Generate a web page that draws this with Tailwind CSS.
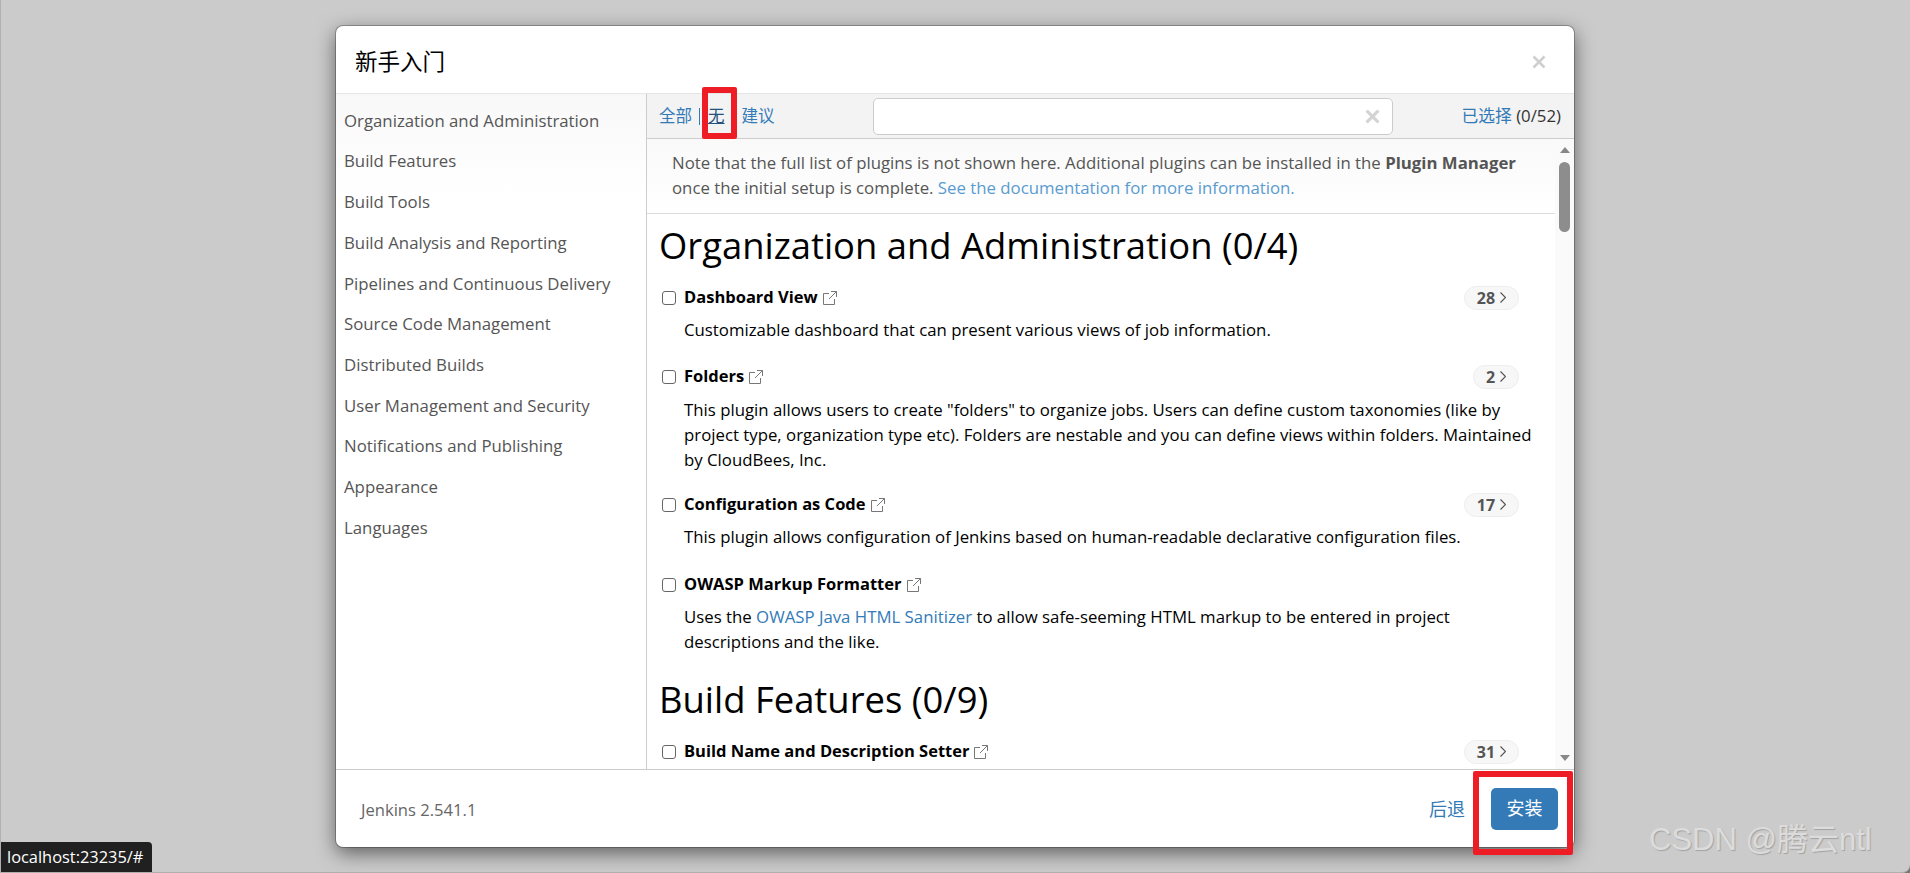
<!DOCTYPE html>
<html lang="zh"><head><meta charset="utf-8"><script src="https://cdn.jsdelivr.net/npm/@tailwindcss/browser@4"></script></head>
<body class="m-0 bg-[#777]">
<div class="relative w-[1910px] h-[873px] overflow-hidden bg-[#cbcbcb] border-l border-b border-[#b0b0b0] rounded-br-[8px] font-['Open_Sans','Noto_Sans_CJK_SC',sans-serif] text-[16.8px] text-[#333]">
  <div class="absolute left-[335px] top-[26px] w-[1238px] h-[821px] bg-white rounded-[7px] shadow-[0_0_0_1px_rgba(0,0,0,0.25),0_6px_20px_rgba(0,0,0,0.55)] flex flex-col overflow-hidden">
    <div class="h-[68px] shrink-0 border-b border-[#e5e5e5] flex items-center justify-between pl-[19px] pr-[28px]">
      <div class="text-[22.5px] text-black pt-[4px]">新手入门</div>
      <svg class="w-[14px] h-[14px] mt-[4px]" viewBox="0 0 14 14"><path d="M1.5 1.5L12.5 12.5M12.5 1.5L1.5 12.5" stroke="#cfcfcf" stroke-width="2.6"/></svg>
    </div>
    <div class="flex-1 flex min-h-0">
      <div class="w-[311px] shrink-0 border-r border-[#ccc] bg-linear-to-b from-[#f8f8f8] to-white to-[15%] pl-[8px] pt-[6px] text-[16.8px] text-[#555]">
        <div class="h-[40.7px] flex items-center">Organization and Administration</div>
        <div class="h-[40.7px] flex items-center">Build Features</div>
        <div class="h-[40.7px] flex items-center">Build Tools</div>
        <div class="h-[40.7px] flex items-center">Build Analysis and Reporting</div>
        <div class="h-[40.7px] flex items-center">Pipelines and Continuous Delivery</div>
        <div class="h-[40.7px] flex items-center">Source Code Management</div>
        <div class="h-[40.7px] flex items-center">Distributed Builds</div>
        <div class="h-[40.7px] flex items-center">User Management and Security</div>
        <div class="h-[40.7px] flex items-center">Notifications and Publishing</div>
        <div class="h-[40.7px] flex items-center">Appearance</div>
        <div class="h-[40.7px] flex items-center">Languages</div>
      </div>
      <div class="flex-1 min-w-0 flex flex-col">
        <div class="h-[45px] shrink-0 bg-[#f3f3f3] border-b border-[#ccc] flex items-center pl-[12px] pr-[13px] text-[16.5px] text-[#337ab7]">
          <span>全部</span><span class="ml-[7px] w-px h-[17px] bg-[#337ab7]"></span><span class="ml-[8px] underline text-[#23527c]">无</span><span class="ml-[17px]">建议</span>
          <div class="ml-[98px] w-[520px] h-[37px] bg-white border border-[#ccc] rounded-[5px] flex items-center justify-end pr-[12px]">
            <svg class="w-[15px] h-[15px]" viewBox="0 0 14 14"><path d="M1.5 1.5L12.5 12.5M12.5 1.5L1.5 12.5" stroke="#d4d4d4" stroke-width="3"/></svg>
          </div>
          <div class="ml-auto text-[16.8px]"><span>已选择</span> <span class="text-[#333]">(0/52)</span></div>
        </div>
        <div class="flex-1 min-h-0 flex">
          <div class="flex-1 min-w-0 overflow-hidden">
            <div class="h-[75px] border-b border-[#ddd] pl-[25px] pr-[20px] pt-[12px] text-[#555] leading-[24.5px] bg-linear-to-b from-[#f9f9f9] to-white">
              Note that the full list of plugins is not shown here. Additional plugins can be installed in the <b>Plugin Manager</b><br>once the initial setup is complete. <span class="text-[#5a9bd1]">See the documentation for more information.</span>
            </div>
            <h2 class="mt-[6px] ml-[12px] text-[36.4px] leading-[50px] text-black">Organization and Administration (0/4)</h2>
            <div class="pl-[15px] pr-[15px] text-black">
              <div class="mt-[15px] flex items-center h-[25px]"><span class="w-[14px] h-[14px] border border-[#666] rounded-[3px] bg-white shrink-0"></span><b class="ml-[8px] font-bold text-[16.5px]">Dashboard View</b><svg class="ml-[4px] w-[16px] h-[16px]" viewBox="0 0 16 16" fill="none" stroke="#777"><path d="M12.5 9v5.5h-11v-11H7M9 1.5h5.5V7M14.5 1.5L7 9"/></svg><span class="ml-auto inline-flex items-center justify-center gap-[5px] h-[24px] w-[55px] mr-[21px] rounded-full bg-[#f7f7f7] border border-[#eee] text-[16px] font-bold text-[#555]">28<svg class="w-[6px] h-[11px]" viewBox="0 0 6 11" fill="none" stroke="#555" stroke-width="1.2"><path d="M.5.5l5 5-5 5"/></svg></span></div>
              <p class="mt-[7px] ml-[22px] leading-[25px]">Customizable dashboard that can present various views of job information.</p>
              <div class="mt-[22px] flex items-center h-[25px]"><span class="w-[14px] h-[14px] border border-[#666] rounded-[3px] bg-white shrink-0"></span><b class="ml-[8px] font-bold text-[16.5px]">Folders</b><svg class="ml-[4px] w-[16px] h-[16px]" viewBox="0 0 16 16" fill="none" stroke="#777"><path d="M12.5 9v5.5h-11v-11H7M9 1.5h5.5V7M14.5 1.5L7 9"/></svg><span class="ml-auto inline-flex items-center justify-center gap-[5px] h-[24px] w-[46px] mr-[21px] rounded-full bg-[#f7f7f7] border border-[#eee] text-[16px] font-bold text-[#555]">2<svg class="w-[6px] h-[11px]" viewBox="0 0 6 11" fill="none" stroke="#555" stroke-width="1.2"><path d="M.5.5l5 5-5 5"/></svg></span></div>
              <p class="mt-[8px] ml-[22px] leading-[25px]">This plugin allows users to create "folders" to organize jobs. Users can define custom taxonomies (like by<br>project type, organization type etc). Folders are nestable and you can define views within folders. Maintained<br>by CloudBees, Inc.</p>
              <div class="mt-[20px] flex items-center h-[25px]"><span class="w-[14px] h-[14px] border border-[#666] rounded-[3px] bg-white shrink-0"></span><b class="ml-[8px] font-bold text-[16.5px]">Configuration as Code</b><svg class="ml-[4px] w-[16px] h-[16px]" viewBox="0 0 16 16" fill="none" stroke="#777"><path d="M12.5 9v5.5h-11v-11H7M9 1.5h5.5V7M14.5 1.5L7 9"/></svg><span class="ml-auto inline-flex items-center justify-center gap-[5px] h-[24px] w-[55px] mr-[21px] rounded-full bg-[#f7f7f7] border border-[#eee] text-[16px] font-bold text-[#555]">17<svg class="w-[6px] h-[11px]" viewBox="0 0 6 11" fill="none" stroke="#555" stroke-width="1.2"><path d="M.5.5l5 5-5 5"/></svg></span></div>
              <p class="mt-[7px] ml-[22px] leading-[25px]">This plugin allows configuration of Jenkins based on human-readable declarative configuration files.</p>
              <div class="mt-[23px] flex items-center h-[25px]"><span class="w-[14px] h-[14px] border border-[#666] rounded-[3px] bg-white shrink-0"></span><b class="ml-[8px] font-bold text-[16.5px]">OWASP Markup Formatter</b><svg class="ml-[4px] w-[16px] h-[16px]" viewBox="0 0 16 16" fill="none" stroke="#777"><path d="M12.5 9v5.5h-11v-11H7M9 1.5h5.5V7M14.5 1.5L7 9"/></svg></div>
              <p class="mt-[7px] ml-[22px] leading-[25px]">Uses the <span class="text-[#337ab7]">OWASP Java HTML Sanitizer</span> to allow safe-seeming HTML markup to be entered in project<br>descriptions and the like.</p>
            </div>
            <h2 class="mt-[20px] ml-[12px] text-[36.4px] leading-[50px] text-black">Build Features (0/9)</h2>
            <div class="pl-[15px] pr-[15px] text-black">
              <div class="mt-[15px] flex items-center h-[25px]"><span class="w-[14px] h-[14px] border border-[#666] rounded-[3px] bg-white shrink-0"></span><b class="ml-[8px] font-bold text-[16.5px]">Build Name and Description Setter</b><svg class="ml-[4px] w-[16px] h-[16px]" viewBox="0 0 16 16" fill="none" stroke="#777"><path d="M12.5 9v5.5h-11v-11H7M9 1.5h5.5V7M14.5 1.5L7 9"/></svg><span class="ml-auto inline-flex items-center justify-center gap-[5px] h-[24px] w-[55px] mr-[21px] rounded-full bg-[#f7f7f7] border border-[#eee] text-[16px] font-bold text-[#555]">31<svg class="w-[6px] h-[11px]" viewBox="0 0 6 11" fill="none" stroke="#555" stroke-width="1.2"><path d="M.5.5l5 5-5 5"/></svg></span></div>
            </div>
          </div>
          <div class="w-[19px] shrink-0 bg-[#fafafa] flex flex-col items-center justify-between py-[8px]">
            <div class="flex flex-col items-center">
              <div class="w-0 h-0 border-x-[5px] border-x-transparent border-b-[6px] border-b-[#888]"></div>
              <div class="mt-[9px] w-[11px] h-[70px] rounded-full bg-[#8d8d8d]"></div>
            </div>
            <div class="w-0 h-0 border-x-[5px] border-x-transparent border-t-[6px] border-t-[#888]"></div>
          </div>
        </div>
      </div>
    </div>
    <div class="h-[78px] shrink-0 border-t border-[#ccc] flex items-center pl-[25px] pr-[16px]">
      <span class="text-[16.6px] text-[#666] pt-[3px]">Jenkins 2.541.1</span>
      <span class="ml-auto text-[18px] text-[#337ab7] pt-[1px]">后退</span>
      <span class="ml-[26px] w-[67px] h-[42px] rounded-[5px] bg-[#337ab7] text-white text-[18px] flex items-center justify-center">安装</span>
    </div>
  </div>
  <div class="absolute left-[701px] top-[87px] w-[35px] h-[52px] border-[6px] border-[#ee1c25] rounded-[2px]"></div>
  <div class="absolute left-[1472px] top-[771px] w-[100px] h-[84px] border-[6px] border-[#ee1c25] rounded-[2px]"></div>
  <div class="absolute left-[-1px] bottom-[-1px] w-[152px] h-[31px] bg-[#202020] rounded-tr-[4px] text-white text-[16.4px] flex items-center pl-[7px]">localhost:23235/#</div>
  <div class="absolute left-[1648px] top-[820px] text-[31px] leading-[40px] text-[#dcdcdc] font-['Liberation_Sans','Noto_Sans_CJK_SC',sans-serif] [text-shadow:1px_1px_1px_rgba(0,0,0,0.2)]">CSDN @腾云ntl</div>
</div>
</body></html>
